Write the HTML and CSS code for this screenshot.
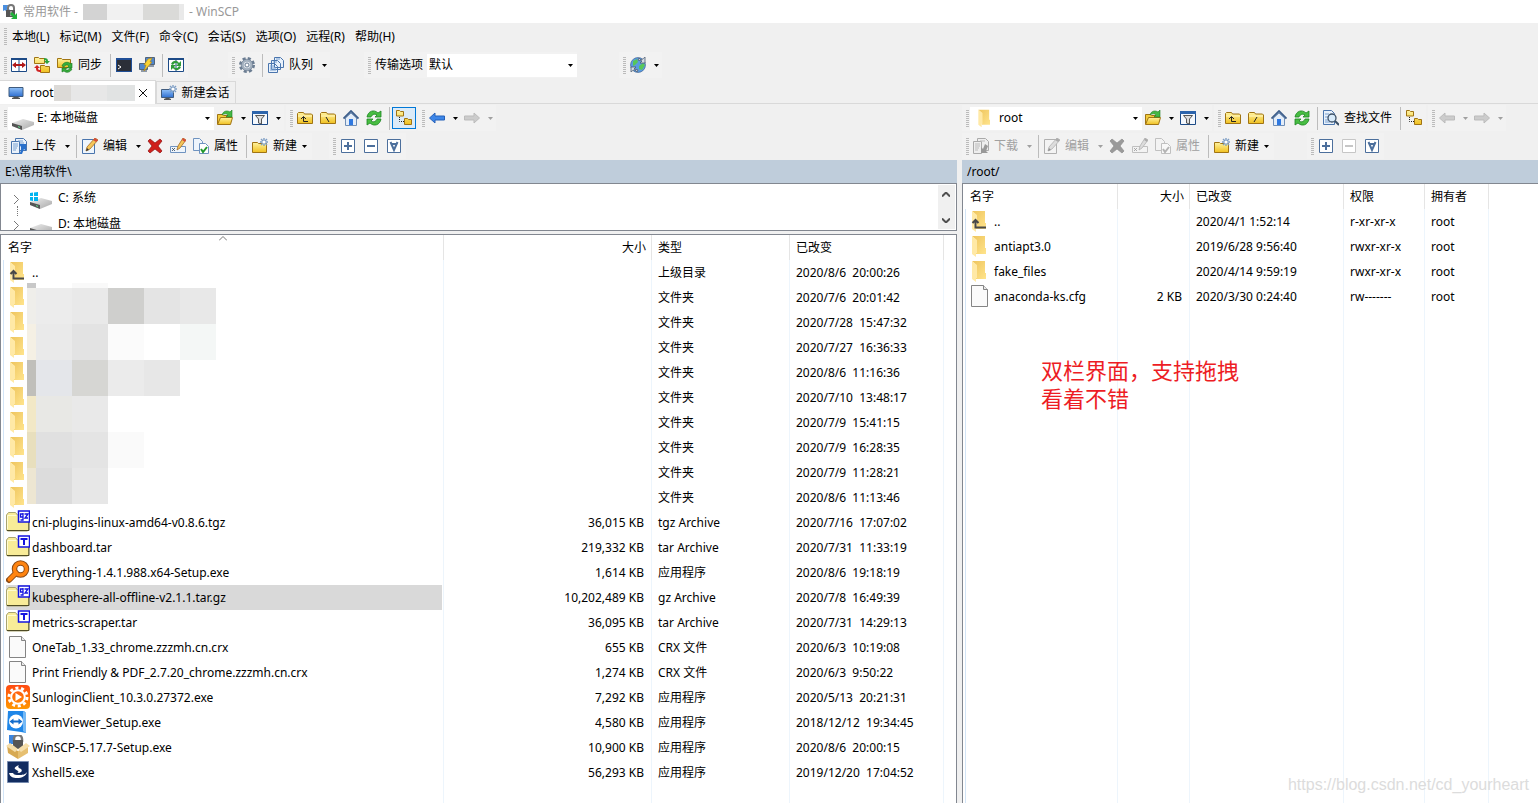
FILE: index.html
```html
<!DOCTYPE html>
<html lang="zh-CN">
  <head>
    <meta charset="UTF-8" />
    <meta name="viewport" content="width=device-width, initial-scale=1.0" />
    <title>常用软件 - WinSCP</title>
    <link rel="stylesheet" href="styles.css">
  </head>
  <body>
    <!-- icon set -->
    <svg class="defs" aria-hidden="true">
      <defs>
        <linearGradient id="gold" x1="0" y1="0" x2="0" y2="1"><stop offset="0" stop-color="#fff3a0" /><stop offset="1" stop-color="#f0c020" /></linearGradient>
        <linearGradient id="blue" x1="0" y1="0" x2="0" y2="1"><stop offset="0" stop-color="#8fc0f8" /><stop offset="1" stop-color="#2f6fd0" /></linearGradient>
        <linearGradient id="metal" x1="0" y1="0" x2="1" y2="1"><stop offset="0" stop-color="#eee" /><stop offset="1" stop-color="#a8a8a8" /></linearGradient>
        <linearGradient id="amber" x1="0" y1="0" x2="1" y2="1"><stop offset="0" stop-color="#eec45c" /><stop offset="1" stop-color="#ffe48c" /></linearGradient>
        <linearGradient id="orange" x1="0" y1="0" x2="0" y2="1"><stop offset="0" stop-color="#ff4a12" /><stop offset="1" stop-color="#ff9800" /></linearGradient>

        <symbol id="logo" viewBox="0 0 16 16"><path d="M1 1h6l-2 2 3 3-3 3-2-3-2 1z" fill="#4a8fe0" /><path d="M6 7V4a3 3 0 0 1 6 0v3" fill="none" stroke="#777" stroke-width="2" /><rect x="4" y="6" width="9" height="7" fill="#555" /><path d="M8 7h2v5H8z" fill="#999" /><path d="M15 15H9l2-2-3-3 2-2 3 3 2-2z" fill="#22b13a" /></symbol>
        <symbol id="compare" viewBox="0 0 16 16"><path d="M.5 1.500h15v13H.5zM8 1v14" fill="#fff" stroke="#1c4a86" /><path d="M0 1h16v2H0z" fill="#1c4a86" /><path d="M1 8l4-3v2h6V5l4 3-4 3V9H5v2z" fill="#b01818" /></symbol>
        <symbol id="folder" viewBox="0 0 16 16"><path d="M.5 13.500V3.500l1-1h5l1 1.500h7l1 1v8.500z" fill="url(#gold)" stroke="#a07414" /><path d="M1 6h14" stroke="#fff6c0" /></symbol>
        <symbol id="sync" viewBox="0 0 16 16"><path d="M.5 6.500v-6h4l1 1h5v5zM6.500 15.500v-7h4l1 1h4v6z" fill="url(#gold)" stroke="#a07414" /><path d="M10 1c3 0 4 1 4 3h2l-3 3-3-3h2c0-1-1-1-2-1z" fill="#2ca33a" /><path d="M7 15c-4 0-5-1-5-4H0l3-3 3 3H4c0 2 1 2 3 2z" fill="#d02424" /></symbol>
        <symbol id="syncdir" viewBox="0 0 16 16"><path d="M.5 10.500v-9h4l1 1h8v8z" fill="url(#gold)" stroke="#a07414" /><path d="M5 9c1-4 6-5 9-2l1-1v5h-5l2-2c-2-2-4-1-5 1zM15 12c-2 4-6 4-8 2l-2 1v-4h5l-2 1c2 2 4 1 5-1z" fill="#38ad3e" stroke="#16781d" stroke-width=".6" /></symbol>
        <symbol id="console" viewBox="0 0 16 16"><path d="M0 1h16v14H0z" fill="#1f4e96" /><path d="M1 3h14v11H1z" fill="#2b2f38" /><path d="M2 8l3 2-3 2" fill="none" stroke="#fff" /></symbol>
        <symbol id="putty" viewBox="0 0 16 16"><path d="M6.500.500h9v7h-9zM.5 6.500h8v6h-8z" fill="#4f87cf" stroke="#536478" /><path d="M2 15h6v-2H2zM9 10h6V8H9z" fill="#8d98a6" /><path d="M9 2l4-1-2 4h2l-8 9 2-6H5z" fill="#fbd234" stroke="#b58610" stroke-width=".6" /></symbol>
        <symbol id="keepsync" viewBox="0 0 16 16"><path d="M.5 1.500h15v13H.5zM8 2v13" fill="#fff" stroke="#1c4a86" /><path d="M0 1h16v2H0z" fill="#1c4a86" /><path d="M3 7c2-4 6-4 8-1l2-2v5H8l2-2C8 5 6 6 5 8zM13 10c-2 4-6 4-8 1l-2 2V8h5l-2 2c2 2 4 1 5-1z" fill="#2f9b3a" /></symbol>
        <symbol id="gear" viewBox="0 0 16 16"><circle cx="8" cy="8" r="6.500" fill="none" stroke="#6b7d92" stroke-width="3" stroke-dasharray="3 2.100" /><circle cx="8" cy="8" r="4.500" fill="#dfe5eb" stroke="#a3b0be" stroke-width="2.500" /><circle cx="8" cy="8" r="5.800" fill="none" stroke="#6b7d92" stroke-width=".7" /><circle cx="8" cy="8" r="2" fill="#fff" stroke="#6b7d92" /></symbol>
        <symbol id="queue" viewBox="0 0 16 16"><path d="M6.500.500h6l3 3v7h-9zM3.500 3.500h6l3 3v6h-9zM.5 6.500h6l3 3v6h-9z" fill="#e8f1fb" stroke="#4a75ad" /><path d="M2 9h4M2 11h6M2 13h6M5 5h4M8 2h4" stroke="#79a0d0" /></symbol>
        <symbol id="globe" viewBox="0 0 16 16"><circle cx="8" cy="8" r="7.500" fill="#5a9be0" stroke="#3a5a86" stroke-width=".6" /><path d="M3 4l4-2 1 3-3 3-2 1zM9 9l4-3 2 2-3 5-3-1z" fill="#58c758" /><path d="M9 1l2 2c2-1 3-2 4-3v6H10l2-2-4-1zM7 15l-2-2c-2 0-3 1-4 2V10h5l-2 2 4 1z" fill="#d4dbe4" stroke="#4d5c70" stroke-width=".8" /></symbol>
        <symbol id="monitor" viewBox="0 0 16 16"><path d="M1 2.500h14v9H1z" fill="url(#blue)" stroke="#3f5b7d" /><path d="M4 14h8v-1l-2-1H6l-2 1z" fill="#555" /></symbol>
        <symbol id="newsession" viewBox="0 0 16 16"><path d="M.5 4.500h12v8H.5z" fill="url(#blue)" stroke="#3f5b7d" /><path d="M3 15h7v-1l-2-1H5l-2 1z" fill="#555" /><path d="M12 0v8M8 4h8M9 1l6 6M15 1L9 7" stroke="#7d9dc4" stroke-width="1.400" /><circle cx="12" cy="4" r="1.600" fill="#fff" /></symbol>
        <symbol id="open" viewBox="0 0 16 16"><path d="M.5 14V4.500h5l1 1h6V8" fill="#f2cc3c" stroke="#a07414" /><path d="M.5 14.500l3-7h12l-2 7z" fill="url(#gold)" stroke="#a07414" /><path d="M5 5c1-4 5-5 8-3l2-2v7H9l2-2c-2-2-4-1-6 0z" fill="#44b844" stroke="#1d7c24" stroke-width=".6" /></symbol>
        <symbol id="filter" viewBox="0 0 16 16"><path d="M.5 1.500h15v13H.5z" fill="#f4f8fd" stroke="#1c4a86" /><path d="M0 1h16v3H0z" fill="#2c64ac" /><path d="M3.500 5.500h9L9.500 9v5l-3-1V9z" fill="#ddd" stroke="#555" /></symbol>
        <symbol id="up" viewBox="0 0 16 16"><use href="#folder" /><path d="M11 11.500H6.500V7M4 9l2.500-2.500L9 9" fill="none" stroke="#222" /></symbol>
        <symbol id="root" viewBox="0 0 16 16"><use href="#folder" /><path d="M6 7l3 5" stroke="#222" /></symbol>
        <symbol id="rootslash" viewBox="0 0 16 16"><use href="#folder" /><path d="M9 7l-3 5" stroke="#222" /></symbol>
        <symbol id="home" viewBox="0 0 16 16"><path d="M2.500 8v7.500h11V8L8 3z" fill="#e4edf8" stroke="#6f8fb8" /><path d="M.5 8.500L8 1l7.500 7.500" fill="none" stroke="#3e5f8c" stroke-width="1.800" /><path d="M6 9h4v6H6z" fill="#2f78e0" /></symbol>
        <symbol id="refresh" viewBox="0 0 16 16"><path d="M1 7c1-6 7-8 11-4l3-2v6H9l2-2C8 3 6 5 5 7zM15 9c-1 6-7 8-11 4l-3 2V9h6l-2 2c3 2 5 0 6-2z" fill="#48bd42" stroke="#1c8522" stroke-width=".8" /></symbol>
        <symbol id="tree" viewBox="0 0 16 16"><path d="M.5 6V.500h3l1 1h3V6zM8.500 14.500v-6h3l1 1h3v5z" fill="url(#gold)" stroke="#a07414" /><path d="M3.500 7v4.500H8" fill="none" stroke="#222" stroke-dasharray="1 1" /></symbol>
        <symbol id="back" viewBox="0 0 16 16"><path d="M.5 8L6 3v3h9.500v4H6v3z" fill="#3d86e8" stroke="#2560b8" /></symbol>
        <symbol id="backoff" viewBox="0 0 16 16"><path d="M.5 8L6 3v3h9.500v4H6v3z" fill="#ccc" stroke="#bbb" /></symbol>
        <symbol id="fwdoff" viewBox="0 0 16 16"><path d="M15.500 8L10 3v3H.5v4H10v3z" fill="#ccc" stroke="#bbb" /></symbol>
        <symbol id="upload" viewBox="0 0 16 16"><path d="M4.500.500h8l3 3v9h-11z" fill="#eaf2fb" stroke="#4a75ad" /><path d="M.5 3.500h8v12h-8z" fill="#eaf2fb" stroke="#4a75ad" /><path d="M2 6h5M2 8h5M2 10h4M2 12h3M7 3h5M9 5h4" stroke="#79a0d0" /><path d="M8 6h7v7l-2-2-2 5H7c3-1 3-4 3-7z" fill="#2870cc" /></symbol>
        <symbol id="download" viewBox="0 0 16 16"><path d="M4.500.500h8l3 3v9h-11z" fill="#eee" stroke="#aaa" /><path d="M.5 3.500h8v12h-8z" fill="#eee" stroke="#aaa" /><path d="M2 6h5M2 8h5M2 10h4M2 12h3M7 3h5" stroke="#bbb" /><path d="M8 15h7l-2-2 2-5-3-2-2 5-2-2z" fill="#999" /></symbol>
        <symbol id="edit" viewBox="0 0 16 16"><path d="M.5 1.500h12v14H.5z" fill="#eef5fc" stroke="#4a75ad" /><path d="M4 13l1-4 8-9 3 2-8 9z" fill="#f5c65a" stroke="#a46b22" stroke-width=".8" /><path d="M13 0l3 2-2 2-3-2z" fill="#d64b3b" /><path d="M4 13l1-3 2 2z" fill="#333" /></symbol>
        <symbol id="delete" viewBox="0 0 16 16"><path d="M3 1l5 4 5-4 2 2-4 5 4 5-2 2-5-4-5 4-2-2 4-5-4-5z" fill="#d0201c" stroke="#8c1010" stroke-width=".7" /></symbol>
        <symbol id="rename" viewBox="0 0 16 16"><path d="M.5 8.500h15v6H.5z" fill="#eef5fc" stroke="#6f93c0" /><path d="M2 10l3 3M5 10l-3 3" stroke="#345" stroke-width=".8" /><path d="M7 12l1-4 5-8 3 2-6 8z" fill="#f5c65a" stroke="#a46b22" stroke-width=".8" /><path d="M13 0l3 2-1 2-3-2z" fill="#d64b3b" /></symbol>
        <symbol id="props" viewBox="0 0 16 16"><path d="M.5.500h6l3 3v9h-9z" fill="#eef5fc" stroke="#6f93c0" /><path d="M6.500 5.500h6l3 3v7h-9z" fill="#fff" stroke="#6f93c0" /><path d="M8 11l2 3 4-5" fill="none" stroke="#22982b" stroke-width="2" /></symbol>
        <symbol id="new" viewBox="0 0 16 16"><path d="M.5 14.500v-10h5l1 1h8v9z" fill="url(#gold)" stroke="#a07414" /><path d="M12 0v8M8 4h8M9 1l6 6M15 1L9 7" stroke="#7d9dc4" stroke-width="1.400" /><circle cx="12" cy="4" r="1.600" fill="#fff" /></symbol>
        <symbol id="find" viewBox="0 0 16 16"><path d="M.5.500h8l3 3v11H.5z" fill="#e8f1fb" stroke="#4a75ad" /><path d="M2 4h4M2 7h3M2 10h3M2 12h5" stroke="#79a0d0" /><circle cx="9" cy="8" r="4" fill="#d8ebfb" stroke="#3c5066" stroke-width="1.300" /><path d="M12 11l4 4" stroke="#3c5066" stroke-width="2" /></symbol>
        <symbol id="plus" viewBox="0 0 16 16"><path d="M1.500 1.500h13v13h-13z" fill="#fff" stroke="currentColor" /><path d="M4 8h8M8 4v8" stroke="currentColor" stroke-width="2" /></symbol>
        <symbol id="minus" viewBox="0 0 16 16"><path d="M1.500 1.500h13v13h-13z" fill="#fff" stroke="currentColor" /><path d="M4 8h8" stroke="currentColor" stroke-width="2" /></symbol>
        <symbol id="invert" viewBox="0 0 16 16"><path d="M1.500 1.500h13v13h-13z" fill="#fff" stroke="currentColor" /><path d="M4.500 4l3.500 8 3.500-8M5 6h6" fill="none" stroke="currentColor" stroke-width="2" /></symbol>
        <symbol id="tri" viewBox="0 0 5 3"><path d="M0 0h5L2.500 3z" fill="currentColor" /></symbol>

        <symbol id="disk" viewBox="0 0 24 18"><path d="M1 11l11-4 11 3v3l-12 5-10-4z" fill="url(#metal)" /><path d="M1 11l10 3v4L1 14z" fill="#555" /><path d="M7 14l2 1v1l-2-1z" fill="#5de08a" /></symbol>
        <symbol id="sysdisk" viewBox="0 0 24 18"><use href="#disk" /><path d="M1 2l3-.500V5H1zM5 1.500L9 1v4H5zM1 6h3v4l-3-.500zM5 6h4v4H5z" fill="#00b4f0" /></symbol>
        <symbol id="dir" viewBox="0 0 24 24"><path d="M4 2h13v12h1v6H8V6z" fill="url(#amber)" /><path d="M4 2l5 4v13H8v4l-4-3z" fill="#ffe9a6" /></symbol>
        <symbol id="updir" viewBox="0 0 24 24"><use href="#dir" /><path d="M18 18.500H7.500V12M4.500 14l3-3 3 3" fill="none" stroke="#484848" stroke-width="2" /></symbol>
        <symbol id="file" viewBox="0 0 24 24"><path d="M3.500 1.500h12l4 4v17h-16z" fill="#fafafa" stroke="#848484" /><path d="M15.500 1.500v4h4" fill="#e8e8e8" stroke="#848484" /></symbol>
        <symbol id="arc" viewBox="0 0 24 24"><path d="M.5 20V5l2-2.500h7l2 2.500h11v15l-1 1h-20z" fill="#f8ec98" stroke="#a9a470" /><path d="M1 20.500h22V8" fill="none" stroke="#4f4c24" /><path d="M1.500 19V5.500h9" fill="none" stroke="#fffbd0" /><path d="M12.500 1h11v11h-11z" fill="#fff" stroke="#1414e0" stroke-width="1.500" /></symbol>
        <symbol id="tar" viewBox="0 0 24 24"><use href="#arc" /><path d="M14.500 4h7M18 4v6" stroke="#1414e0" stroke-width="2" /></symbol>
        <symbol id="gz" viewBox="0 0 24 24"><use href="#arc" /><path d="M17 4h-2.500v3H17V3v7h-2.500M18.500 4h3.500l-3 4h3" fill="none" stroke="#1414e0" stroke-width="1.300" /></symbol>
        <symbol id="everything" viewBox="0 0 24 24"><circle cx="14.500" cy="9" r="6" fill="none" stroke="#8a4a16" stroke-width="5.500" /><path d="M10 13l-7 7" stroke="#8a4a16" stroke-width="6" stroke-linecap="round" /><circle cx="14.500" cy="9" r="6" fill="none" stroke="#ff8410" stroke-width="3.500" /><path d="M10 13l-6.500 6.500" stroke="#ff8410" stroke-width="4" stroke-linecap="round" /></symbol>
        <symbol id="sunlogin" viewBox="0 0 24 24"><rect width="24" height="24" rx="4" fill="url(#orange)" /><circle cx="12" cy="12" r="9" fill="none" stroke="#fff" stroke-width="3" stroke-dasharray="3 2.650" /><circle cx="12" cy="12" r="6.800" fill="none" stroke="#fff" stroke-width="2" /><path d="M9.500 8l6.500 4-6.500 4z" fill="#fff" /></symbol>
        <symbol id="teamviewer" viewBox="0 0 24 24"><path d="M2 1l16 0 2 2v20l-5-1-14-2z" fill="#1e86e8" /><path d="M17 1l3 2v20l-3-2z" fill="#75b9f5" /><circle cx="10" cy="11.500" r="7" fill="#fff" /><path d="M3.500 11.500l4-3v2h5v-2l4 3-4 3v-2h-5v2z" fill="#126ccc" /></symbol>
        <symbol id="winscp" viewBox="0 0 24 24"><path d="M3 0h6v9H3z" fill="#3a85e0" /><path d="M8 7V4a4 4 0 0 1 8 0v3" fill="none" stroke="#777" stroke-width="2.500" /><path d="M7 5h10v9H7z" fill="#555" /><path d="M1 10l11 6v8L2 18z" fill="#d7a952" /><path d="M12 16l10-6v8l-10 6z" fill="#e6bf70" /><path d="M0 11l4-3 8 6-3 3zM12 14l8-6 4 3-9 6z" fill="#f5deaa" /></symbol>
        <symbol id="xshell" viewBox="0 0 24 24"><path d="M1.500 1.500h21v21h-21z" fill="#122c60" stroke="#7489ad" /><path d="M3 13c1 4 4 5 8 5 5 0 9-2 10-6-2 3-5 3-8 3s-5 0-6-2z" fill="#fff" /><path d="M13 5c-3 1-5 3-4 4l3 2c1 1 0 2-1 2 4 0 6-2 4-4l-2-1c-1-1-1-2 0-3z" fill="#fff" /></symbol>
      </defs>
    </svg>

    <div class="window">
      <header class="titlebar">
        <svg class="icon"><use href="#logo" /></svg>
        <span>常用软件 -</span>
        <span class="censor censor-title"></span>
        <span>- WinSCP</span>
      </header>

      <nav class="menubar">
        <span class="grip"></span>
        <button>本地(L)</button>
        <button>标记(M)</button>
        <button>文件(F)</button>
        <button>命令(C)</button>
        <button>会话(S)</button>
        <button>选项(O)</button>
        <button>远程(R)</button>
        <button>帮助(H)</button>
      </nav>

      <div class="toolbar main-toolbar">
        <div class="band">
          <span class="grip"></span>
          <button class="tool" aria-label="比较目录"><svg class="icon"><use href="#compare" /></svg></button>
          <button class="tool" aria-label="同步浏览"><svg class="icon"><use href="#sync" /></svg></button>
          <button class="tool text"><svg class="icon"><use href="#syncdir" /></svg>同步</button>
          <span class="sep"></span>
          <button class="tool" aria-label="终端"><svg class="icon"><use href="#console" /></svg></button>
          <button class="tool" aria-label="PuTTY"><svg class="icon"><use href="#putty" /></svg></button>
          <span class="sep"></span>
          <button class="tool" aria-label="保持更新"><svg class="icon"><use href="#keepsync" /></svg></button>
        </div>
        <div class="band band-queue">
          <span class="grip"></span>
          <button class="tool" aria-label="选项"><svg class="icon"><use href="#gear" /></svg></button>
          <span class="sep"></span>
          <button class="tool text"><svg class="icon"><use href="#queue" /></svg>队列</button>
          <button class="drop" aria-label="队列菜单"><svg><use href="#tri" /></svg></button>
        </div>
        <div class="band band-transfer">
          <span class="grip"></span>
          <label for="transfer">传输选项</label>
          <div class="combo"><select id="transfer"><option>默认</option></select><svg class="tri"><use href="#tri" /></svg></div>
        </div>
        <div class="band">
          <span class="grip"></span>
          <button class="tool" aria-label="传输设置"><svg class="icon"><use href="#globe" /></svg></button>
          <button class="drop" aria-label="更多"><svg><use href="#tri" /></svg></button>
        </div>
      </div>

      <div class="tabs">
        <button class="tab active"><svg class="icon"><use href="#monitor" /></svg>root<span class="censor censor-tab"></span><svg class="close" viewBox="0 0 8 8"><path d="M0 0l8 8M8 0L0 8" stroke="#111" /></svg></button>
        <button class="tab"><svg class="icon"><use href="#newsession" /></svg>新建会话</button>
      </div>

      <main class="panes">
        <section class="pane">
          <div class="toolbar">
            <div class="band">
              <span class="grip"></span>
              <div class="combo drive"><svg class="disk"><use href="#disk" /></svg><select aria-label="驱动器"><option>E: 本地磁盘</option></select><svg class="tri"><use href="#tri" /></svg></div>
              <button class="tool" aria-label="打开目录"><svg class="icon"><use href="#open" /></svg></button>
              <button class="drop" aria-label="打开菜单"><svg><use href="#tri" /></svg></button>
              <button class="tool" aria-label="过滤"><svg class="icon"><use href="#filter" /></svg></button>
              <button class="drop" aria-label="过滤菜单"><svg><use href="#tri" /></svg></button>
            </div>
            <div class="band">
              <span class="grip"></span>
              <button class="tool" aria-label="上级目录"><svg class="icon"><use href="#up" /></svg></button>
              <button class="tool" aria-label="根目录"><svg class="icon"><use href="#root" /></svg></button>
              <button class="tool" aria-label="主目录"><svg class="icon"><use href="#home" /></svg></button>
              <button class="tool" aria-label="刷新"><svg class="icon"><use href="#refresh" /></svg></button>
              <span class="sep"></span>
              <button class="tool pressed" aria-label="目录树"><svg class="icon"><use href="#tree" /></svg></button>
            </div>
            <div class="band">
              <span class="grip"></span>
              <button class="tool" aria-label="后退"><svg class="icon"><use href="#back" /></svg></button>
              <button class="drop" aria-label="后退历史"><svg><use href="#tri" /></svg></button>
              <button class="tool" aria-label="前进" disabled><svg class="icon"><use href="#fwdoff" /></svg></button>
              <button class="drop" aria-label="前进历史" disabled><svg><use href="#tri" /></svg></button>
            </div>
          </div>
          <div class="toolbar">
            <div class="band">
              <span class="grip"></span>
              <button class="tool text"><svg class="icon"><use href="#upload" /></svg>上传</button>
              <button class="drop" aria-label="上传菜单"><svg><use href="#tri" /></svg></button>
              <span class="sep"></span>
              <button class="tool text"><svg class="icon"><use href="#edit" /></svg>编辑</button>
              <button class="drop" aria-label="编辑菜单"><svg><use href="#tri" /></svg></button>
              <button class="tool" aria-label="删除"><svg class="icon"><use href="#delete" /></svg></button>
              <button class="tool" aria-label="重命名"><svg class="icon"><use href="#rename" /></svg></button>
              <button class="tool text"><svg class="icon"><use href="#props" /></svg>属性</button>
              <span class="sep"></span>
              <button class="tool text"><svg class="icon"><use href="#new" /></svg>新建<svg class="tri"><use href="#tri" /></svg></button>
            </div>
            <div class="band band-select">
              <span class="grip"></span>
              <button class="tool mark" aria-label="选择文件"><svg class="icon"><use href="#plus" /></svg></button>
              <button class="tool mark" aria-label="取消选择"><svg class="icon"><use href="#minus" /></svg></button>
              <button class="tool mark" aria-label="反选"><svg class="icon"><use href="#invert" /></svg></button>
            </div>
          </div>
          <div class="path">E:\常用软件\</div>
          <div class="tree">
            <ul>
              <li><svg class="chevron" viewBox="0 0 5 9"><path d="M0 0l4.500 4.500L0 9" /></svg><svg class="disk"><use href="#sysdisk" /></svg>C: 系统</li>
              <li><svg class="chevron" viewBox="0 0 5 9"><path d="M0 0l4.500 4.500L0 9" /></svg><svg class="disk"><use href="#disk" /></svg>D: 本地磁盘</li>
            </ul>
            <div class="scrollbar">
              <svg viewBox="0 0 8 5"><path d="M0 4.500l4-4 4 4" /></svg>
              <svg viewBox="0 0 8 5"><path d="M0 .500l4 4 4-4" /></svg>
            </div>
          </div>
          <div class="list local">
            <svg class="sort" viewBox="0 0 8 5"><path d="M0 4.500l4-4 4 4" /></svg>
            <table>
              <thead>
                <tr><th class="name">名字</th><th class="size">大小</th><th class="type">类型</th><th class="date">已改变</th><th></th></tr>
              </thead>
              <tbody>
                <tr><td><div><svg><use href="#updir" /></svg>..</div></td><td></td><td>上级目录</td><td>2020/8/6&nbsp; 20:00:26</td><td></td></tr>
                <tr><td><div><svg><use href="#dir" /></svg></div></td><td></td><td>文件夹</td><td>2020/7/6&nbsp; 20:01:42</td><td></td></tr>
                <tr><td><div><svg><use href="#dir" /></svg></div></td><td></td><td>文件夹</td><td>2020/7/28&nbsp; 15:47:32</td><td></td></tr>
                <tr><td><div><svg><use href="#dir" /></svg></div></td><td></td><td>文件夹</td><td>2020/7/27&nbsp; 16:36:33</td><td></td></tr>
                <tr><td><div><svg><use href="#dir" /></svg></div></td><td></td><td>文件夹</td><td>2020/8/6&nbsp; 11:16:36</td><td></td></tr>
                <tr><td><div><svg><use href="#dir" /></svg></div></td><td></td><td>文件夹</td><td>2020/7/10&nbsp; 13:48:17</td><td></td></tr>
                <tr><td><div><svg><use href="#dir" /></svg></div></td><td></td><td>文件夹</td><td>2020/7/9&nbsp; 15:41:15</td><td></td></tr>
                <tr><td><div><svg><use href="#dir" /></svg></div></td><td></td><td>文件夹</td><td>2020/7/9&nbsp; 16:28:35</td><td></td></tr>
                <tr><td><div><svg><use href="#dir" /></svg></div></td><td></td><td>文件夹</td><td>2020/7/9&nbsp; 11:28:21</td><td></td></tr>
                <tr><td><div><svg><use href="#dir" /></svg></div></td><td></td><td>文件夹</td><td>2020/8/6&nbsp; 11:13:46</td><td></td></tr>
                <tr><td><div><svg><use href="#gz" /></svg>cni-plugins-linux-amd64-v0.8.6.tgz</div></td><td>36,015 KB</td><td>tgz Archive</td><td>2020/7/16&nbsp; 17:07:02</td><td></td></tr>
                <tr><td><div><svg><use href="#tar" /></svg>dashboard.tar</div></td><td>219,332 KB</td><td>tar Archive</td><td>2020/7/31&nbsp; 11:33:19</td><td></td></tr>
                <tr><td><div><svg><use href="#everything" /></svg>Everything-1.4.1.988.x64-Setup.exe</div></td><td>1,614 KB</td><td>应用程序</td><td>2020/8/6&nbsp; 19:18:19</td><td></td></tr>
                <tr class="selected"><td><div><svg><use href="#gz" /></svg>kubesphere-all-offline-v2.1.1.tar.gz</div></td><td>10,202,489 KB</td><td>gz Archive</td><td>2020/7/8&nbsp; 16:49:39</td><td></td></tr>
                <tr><td><div><svg><use href="#tar" /></svg>metrics-scraper.tar</div></td><td>36,095 KB</td><td>tar Archive</td><td>2020/7/31&nbsp; 14:29:13</td><td></td></tr>
                <tr><td><div><svg><use href="#file" /></svg>OneTab_1.33_chrome.zzzmh.cn.crx</div></td><td>655 KB</td><td>CRX 文件</td><td>2020/6/3&nbsp; 10:19:08</td><td></td></tr>
                <tr><td><div><svg><use href="#file" /></svg>Print Friendly &amp; PDF_2.7.20_chrome.zzzmh.cn.crx</div></td><td>1,274 KB</td><td>CRX 文件</td><td>2020/6/3&nbsp; 9:50:22</td><td></td></tr>
                <tr><td><div><svg><use href="#sunlogin" /></svg>SunloginClient_10.3.0.27372.exe</div></td><td>7,292 KB</td><td>应用程序</td><td>2020/5/13&nbsp; 20:21:31</td><td></td></tr>
                <tr><td><div><svg><use href="#teamviewer" /></svg>TeamViewer_Setup.exe</div></td><td>4,580 KB</td><td>应用程序</td><td>2018/12/12&nbsp; 19:34:45</td><td></td></tr>
                <tr><td><div><svg><use href="#winscp" /></svg>WinSCP-5.17.7-Setup.exe</div></td><td>10,900 KB</td><td>应用程序</td><td>2020/8/6&nbsp; 20:00:15</td><td></td></tr>
                <tr><td><div><svg><use href="#xshell" /></svg>Xshell5.exe</div></td><td>56,293 KB</td><td>应用程序</td><td>2019/12/20&nbsp; 17:04:52</td><td></td></tr>
                <tr class="rest"><td></td><td></td><td></td><td></td><td></td></tr>
              </tbody>
            </table>
            <!-- mosaic over the private folder names -->
            <svg class="mosaic" viewBox="0 0 189 221" shape-rendering="crispEdges">
              <path fill="#c8c8c8" d="M0 0h9v5H0z" /><path fill="#f9f9f9" d="M45 0h36v5H45z" />
              <path fill="#efeeea" d="M0 5h9v36H0z" /><path fill="#ececec" d="M9 5h36v36H9z" /><path fill="#e9e9e9" d="M45 5h36v36H45z" /><path fill="#cfcfcd" d="M81 5h36v36H81z" /><path fill="#e4e4e4" d="M117 5h36v36h-36z" /><path fill="#e8e8e8" d="M153 5h36v36h-36z" />
              <path fill="#f5f0e4" d="M0 41h9v36H0z" /><path fill="#eaeaea" d="M9 41h36v36H9z" /><path fill="#e3e3e3" d="M45 41h36v36H45z" /><path fill="#fbfbfb" d="M81 41h36v36H81z" /><path fill="#fff" d="M117 41h36v36h-36z" /><path fill="#f4f7f6" d="M153 41h36v36h-36z" />
              <path fill="#c0bfba" d="M0 77h9v36H0z" /><path fill="#e4e6ea" d="M9 77h36v36H9z" /><path fill="#d6d6d3" d="M45 77h36v36H45z" /><path fill="#ebebeb" d="M81 77h36v36H81z" /><path fill="#e7e7e7" d="M117 77h36v36h-36z" />
              <path fill="#f2e8c6" d="M0 113h9v36H0z" /><path fill="#e8e8e5" d="M9 113h36v36H9z" /><path fill="#e9e9e9" d="M45 113h36v36H45z" />
              <path fill="#e8dfbd" d="M0 149h9v36H0z" /><path fill="#e0e0e0" d="M9 149h36v36H9z" /><path fill="#e4e4e4" d="M45 149h36v36H45z" /><path fill="#fafafa" d="M81 149h36v36H81z" />
              <path fill="#ede6d2" d="M0 185h9v36H0z" /><path fill="#dcdcdc" d="M9 185h36v36H9z" /><path fill="#e7e7e7" d="M45 185h36v36H45z" />
            </svg>
          </div>
        </section>

        <section class="pane">
          <div class="toolbar">
            <div class="band">
              <span class="grip"></span>
              <div class="combo remote-dir"><svg class="dir"><use href="#dir" /></svg><select aria-label="远程目录"><option>root</option></select><svg class="tri"><use href="#tri" /></svg></div>
              <button class="tool" aria-label="打开目录"><svg class="icon"><use href="#open" /></svg></button>
              <button class="drop" aria-label="打开菜单"><svg><use href="#tri" /></svg></button>
              <button class="tool" aria-label="过滤"><svg class="icon"><use href="#filter" /></svg></button>
              <button class="drop" aria-label="过滤菜单"><svg><use href="#tri" /></svg></button>
            </div>
            <div class="band">
              <span class="grip"></span>
              <button class="tool" aria-label="上级目录"><svg class="icon"><use href="#up" /></svg></button>
              <button class="tool" aria-label="根目录"><svg class="icon"><use href="#rootslash" /></svg></button>
              <button class="tool" aria-label="主目录"><svg class="icon"><use href="#home" /></svg></button>
              <button class="tool" aria-label="刷新"><svg class="icon"><use href="#refresh" /></svg></button>
              <span class="sep"></span>
              <button class="tool text"><svg class="icon"><use href="#find" /></svg>查找文件</button>
              <span class="sep"></span>
              <button class="tool" aria-label="目录树"><svg class="icon"><use href="#tree" /></svg></button>
            </div>
            <div class="band">
              <span class="grip"></span>
              <button class="tool" aria-label="后退" disabled><svg class="icon"><use href="#backoff" /></svg></button>
              <button class="drop" aria-label="后退历史" disabled><svg><use href="#tri" /></svg></button>
              <button class="tool" aria-label="前进" disabled><svg class="icon"><use href="#fwdoff" /></svg></button>
              <button class="drop" aria-label="前进历史" disabled><svg><use href="#tri" /></svg></button>
            </div>
          </div>
          <div class="toolbar">
            <div class="band">
              <span class="grip"></span>
              <button class="tool text" disabled><svg class="icon"><use href="#download" /></svg>下载</button>
              <button class="drop" aria-label="下载菜单" disabled><svg><use href="#tri" /></svg></button>
              <span class="sep"></span>
              <button class="tool text faded" disabled><svg class="icon"><use href="#edit" /></svg>编辑</button>
              <button class="drop" aria-label="编辑菜单" disabled><svg><use href="#tri" /></svg></button>
              <button class="tool faded" aria-label="删除" disabled><svg class="icon"><use href="#delete" /></svg></button>
              <button class="tool faded" aria-label="重命名" disabled><svg class="icon"><use href="#rename" /></svg></button>
              <button class="tool text faded" disabled><svg class="icon"><use href="#props" /></svg>属性</button>
              <span class="sep"></span>
              <button class="tool text"><svg class="icon"><use href="#new" /></svg>新建<svg class="tri"><use href="#tri" /></svg></button>
            </div>
            <div class="band band-select-remote">
              <span class="grip"></span>
              <button class="tool mark" aria-label="选择文件"><svg class="icon"><use href="#plus" /></svg></button>
              <button class="tool mark" aria-label="取消选择" disabled><svg class="icon"><use href="#minus" /></svg></button>
              <button class="tool mark" aria-label="反选"><svg class="icon"><use href="#invert" /></svg></button>
            </div>
          </div>
          <div class="path">/root/</div>
          <div class="list remote">
            <table>
              <thead>
                <tr><th class="name">名字</th><th class="size">大小</th><th class="date">已改变</th><th class="rights">权限</th><th class="owner">拥有者</th><th></th></tr>
              </thead>
              <tbody>
                <tr><td><div><svg><use href="#updir" /></svg>..</div></td><td></td><td>2020/4/1 1:52:14</td><td>r-xr-xr-x</td><td>root</td><td></td></tr>
                <tr><td><div><svg><use href="#dir" /></svg>antiapt3.0</div></td><td></td><td>2019/6/28 9:56:40</td><td>rwxr-xr-x</td><td>root</td><td></td></tr>
                <tr><td><div><svg><use href="#dir" /></svg>fake_files</div></td><td></td><td>2020/4/14 9:59:19</td><td>rwxr-xr-x</td><td>root</td><td></td></tr>
                <tr><td><div><svg><use href="#file" /></svg>anaconda-ks.cfg</div></td><td>2 KB</td><td>2020/3/30 0:24:40</td><td>rw-------</td><td>root</td><td></td></tr>
                <tr class="rest"><td></td><td></td><td></td><td></td><td></td><td></td></tr>
              </tbody>
            </table>
            <p class="note">双栏界面，支持拖拽<br />看着不错</p>
            <p class="watermark">https://blog.csdn.net/cd_yourheart</p>
          </div>
        </section>
      </main>
    </div>
  </body>
</html>
```
FILE: styles.css
```css
* {
  box-sizing: border-box;
}
body {
  margin: 0;
  background-color: #f0f0f0;
  color: #000;
  font-family: "Noto Sans", "Noto Sans CJK SC", sans-serif;
  font-size: 12px;
  line-height: 16px;
}
button,
select {
  margin: 0;
  padding: 0;
  border: 0;
  background: none;
  color: inherit;
  font: inherit;
  white-space: nowrap;
}
svg {
  flex: none;
  display: block;
}
.defs {
  position: absolute;
  width: 0;
  height: 0;
}
.icon {
  width: 16px;
  height: 16px;
}
.window {
  height: 100vh;
  display: flex;
  flex-direction: column;
  overflow: hidden;
}

/* title and menu */
.titlebar {
  height: 23px;
  padding-left: 2px;
  display: flex;
  align-items: center;
  gap: 5px;
  background-color: #fff;
  color: #999;
}
.censor {
  height: 16px;
}
.censor-title {
  width: 101px;
  background: linear-gradient(90deg, #d3d3d3 24px, #f1f1f1 24px 60px, #dadad8 60px 96px, #e9e9e9 96px);
}
.censor-tab {
  width: 81px;
  background: linear-gradient(90deg, #dcdad7 17px, #e7e7e7 17px 53px, #e1e3e3 53px);
}
.menubar {
  height: 27px;
  display: flex;
  align-items: center;
}
.menubar button {
  padding: 0 6px 0 4px;
}
.grip {
  flex: none;
  width: 3px;
  height: 17px;
  margin: 0 1px 0 4px;
  background: repeating-linear-gradient(#bbb 0 1px, transparent 1px 2px);
}

/* toolbars */
.toolbar {
  height: 28px;
  display: flex;
  align-items: center;
  gap: 2px;
}
.main-toolbar {
  height: 30px;
}
.band {
  flex: none;
  height: 26px;
  display: flex;
  align-items: center;
  background-color: #f2f2f2;
}
.band-queue {
  margin-left: 38px;
}
.band-transfer {
  margin: 0 40px 0 32px;
}
.band-transfer label {
  padding: 0 4px 0 3px;
}
.band-select {
  margin-left: 15px;
}
.band-select-remote {
  margin-left: 31px;
}
.tool {
  height: 24px;
  padding: 0 4px 0 3px;
  display: flex;
  align-items: center;
  gap: 5px;
}
.tool.text {
  padding-right: 5px;
}
.tool:disabled,
.drop:disabled {
  color: #a0a0a0;
}
.faded .icon {
  filter: grayscale(1);
  opacity: 0.5;
}
.pressed {
  padding: 0 3px;
  height: 22px;
  border: 1px solid #0078d7;
  background-color: #dcebf8;
}
.mark {
  color: #4c6f9c;
}
.mark:disabled {
  color: #c6c6c6;
}
.drop {
  width: 12px;
  height: 24px;
  padding-left: 4px;
}
.drop svg,
.tri {
  width: 5px;
  height: 3px;
}
.sep {
  width: 1px;
  height: 23px;
  margin: 0 2px 0 3px;
  background-color: #bcbcbc;
}
.combo {
  width: 150px;
  height: 23px;
  padding-right: 4px;
  display: flex;
  align-items: center;
  background-color: #fff;
}
.combo select {
  flex: 1;
  min-width: 0;
  padding-left: 2px;
  appearance: none;
  outline: 0;
}
.drive {
  width: 206px;
  padding-left: 3px;
}
.remote-dir {
  width: 172px;
  padding-left: 3px;
}
.disk {
  width: 24px;
  height: 18px;
}
.drive .disk {
  align-self: flex-end;
}
.dir {
  width: 24px;
  height: 20px;
}

/* session tabs */
.tabs {
  height: 24px;
  display: flex;
  align-items: flex-end;
  border-bottom: 1px solid #d9d9d9;
}
.tab {
  height: 22px;
  padding: 0 5px 0 4px;
  display: flex;
  align-items: center;
  gap: 5px;
  border: 1px solid #d9d9d9;
  border-bottom: 0;
}
.tab.active {
  height: 24px;
  margin-bottom: -1px;
  padding: 0 8px;
  gap: 0;
  border-left: 0;
  background-color: #fff;
}
.tab.active .icon {
  margin-right: 6px;
}
.close {
  width: 8px;
  height: 8px;
  margin-left: 4px;
}

/* the two panes */
.panes {
  flex: 1;
  min-height: 0;
  display: grid;
  grid-template-columns: 957fr 576fr;
  gap: 5px;
}
.pane {
  min-width: 0;
  min-height: 0;
  display: flex;
  flex-direction: column;
}
.path {
  height: 23px;
  padding: 4px 5px;
  background-color: #bfcddb;
}
.tree {
  height: 48px;
  margin-bottom: 3px;
  display: flex;
  justify-content: space-between;
  overflow: hidden;
  border: 1px solid #828790;
  background-color: #fff;
}
.tree ul {
  margin: 0;
  padding: 1px 0 0 13px;
  list-style: none;
}
.tree li {
  position: relative;
  height: 26px;
  display: flex;
  align-items: center;
}
.tree li:first-child::after {
  content: "";
  position: absolute;
  top: 21px;
  left: 3px;
  height: 10px;
  border-left: 1px dotted #777;
}
.tree .disk {
  margin: 4px 5px 0 10px;
}
.chevron {
  width: 5px;
  height: 9px;
  margin-top: 2px;
}
.chevron path,
.scrollbar path,
.sort path {
  fill: none;
  stroke: #777;
}
.scrollbar {
  width: 17px;
  margin: 1px;
  padding: 7px 4px 6px;
  display: flex;
  flex-direction: column;
  justify-content: space-between;
  background-color: #f0f0f0;
}
.scrollbar svg,
.sort {
  width: 8px;
  height: 5px;
}
.scrollbar path {
  stroke: #505050;
  stroke-width: 2;
}
.list {
  flex: 1;
  min-height: 0;
  position: relative;
  overflow: hidden;
  padding-left: 2px;
  border: 1px solid #828790;
  border-bottom: 0;
  background-color: #fff;
}
.remote {
  border-right: 0;
}
.sort {
  position: absolute;
  top: 1px;
  left: 218px;
}

/* file tables */
table {
  width: 100%;
  height: 100%;
  table-layout: fixed;
  border-collapse: separate;
  border-spacing: 0;
}
th,
td {
  height: 25px;
  padding: 0 7px 0 6px;
  border-right: 1px solid #edf5fc;
  overflow: hidden;
  text-align: left;
  font-weight: normal;
  white-space: nowrap;
}
th {
  border-color: #e5e5e5;
}
th:first-child {
  padding-left: 5px;
}
td:first-child {
  padding: 0 1px 0 2px;
  border-left: 1px solid #d3e5f7;
}
th:last-child,
td:last-child {
  border-right: 0;
}
th:nth-child(2),
td:nth-child(2) {
  text-align: right;
}
th:nth-child(2) {
  padding-right: 5px;
}
td div {
  height: 25px;
  display: flex;
  align-items: center;
  gap: 2px;
}
td div svg {
  width: 24px;
  height: 24px;
  align-self: flex-start;
}
.rest td {
  height: auto;
}
.selected div {
  background-color: #d9d9d9;
}
.local .name {
  width: 441px;
}
.local .size {
  width: 208px;
}
.local .type {
  width: 138px;
}
.local .date {
  width: 154px;
}
.remote .name {
  width: 153px;
}
.remote .size {
  width: 72px;
}
.remote .date {
  width: 154px;
}
.remote .rights {
  width: 81px;
}
.remote .owner {
  width: 64px;
}
.mosaic {
  position: absolute;
  top: 48px;
  left: 26px;
  width: 189px;
  height: 221px;
}
.note {
  position: absolute;
  top: 172px;
  left: 78px;
  margin: 0;
  color: #ed1c24;
  font-size: 22px;
  line-height: 28px;
}
.watermark {
  position: absolute;
  right: 9px;
  bottom: 8px;
  margin: 0;
  color: #dcdcdc;
  font-family: "Liberation Sans", sans-serif;
  font-size: 16px;
  line-height: 20px;
}
```
